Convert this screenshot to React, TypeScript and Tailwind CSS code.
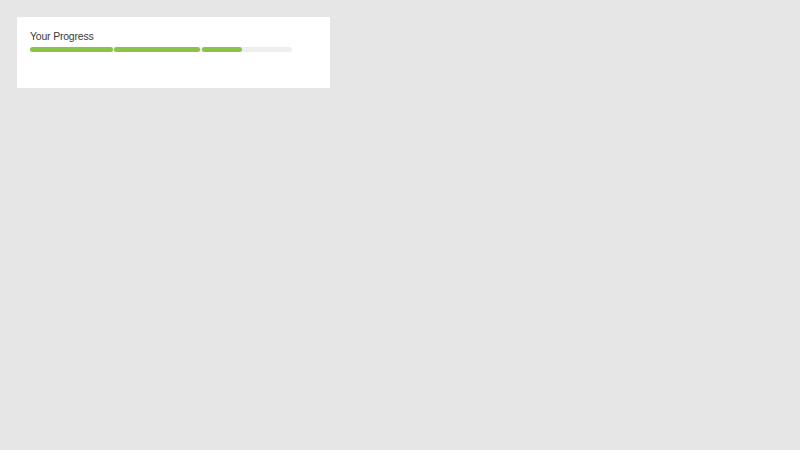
import React from "react";

export default function App() {
  return (
    <div className="min-h-screen w-full bg-[#e6e6e6] p-[17px]" style={{ fontFamily: '"Liberation Sans", Arial, sans-serif' }}>
      <div className="w-[313px] h-[71px] bg-white px-[13px] pt-[11px]">
        <div className="text-[10.5px] tracking-[-0.2px] leading-[16px] text-[#3a3a3a]">Your Progress</div>
        <div className="mt-[3px] w-[262px] h-[5px] rounded-full bg-[#eeeeee] flex">
          <div className="h-full w-[83px] rounded-full bg-[#8bc34a]" />
          <div className="h-full w-[86px] ml-[1px] rounded-full bg-[#8bc34a]" />
          <div className="h-full w-[40px] ml-[2px] rounded-full bg-[#8bc34a]" />
        </div>
      </div>
    </div>
  );
}
